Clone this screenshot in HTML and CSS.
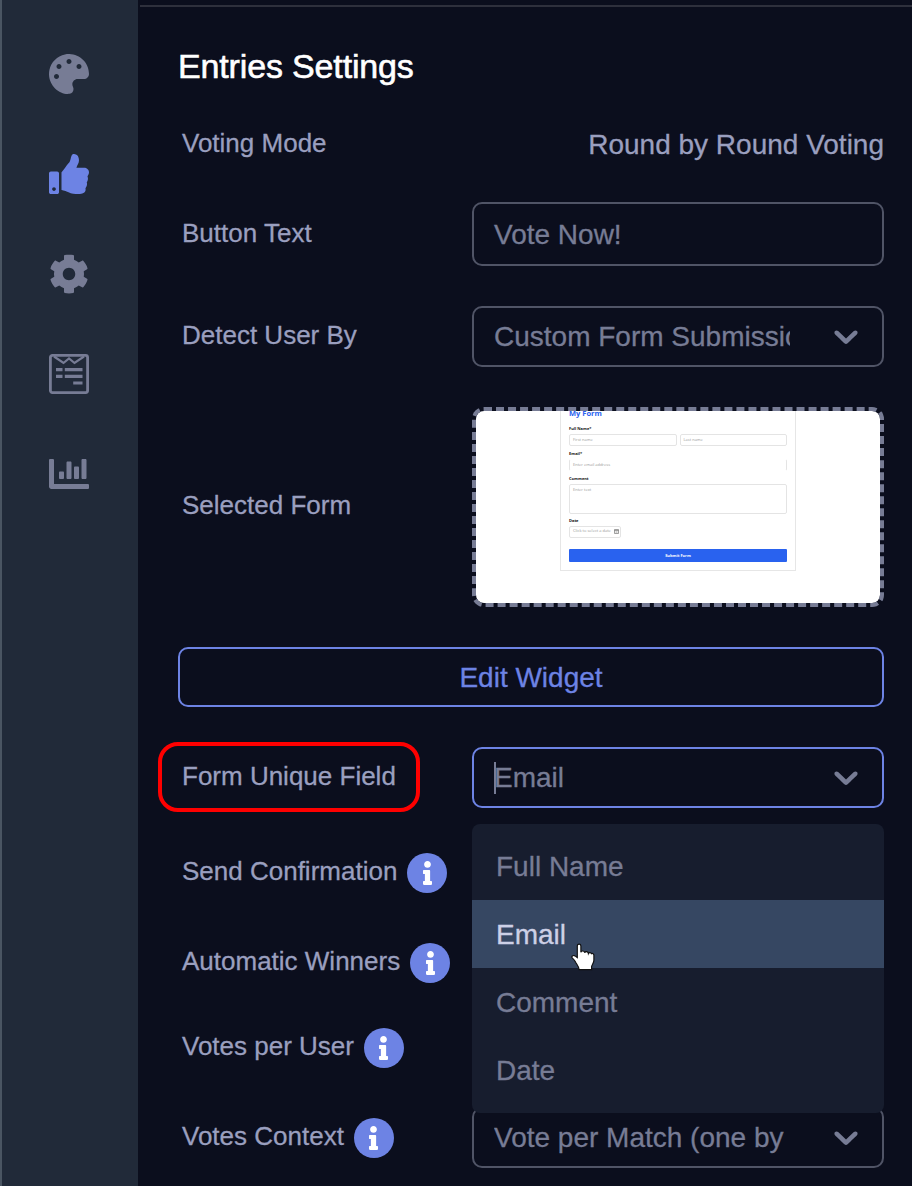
FILE: index.html
```
<!DOCTYPE html>
<html lang="en">
<head>
    <meta charset="UTF-8">
    <meta name="viewport" content="width=device-width, initial-scale=1.0">
    <title>Entries Settings</title>
    <link rel="stylesheet" href="styles.css">
</head>
<body>
    <!-- Shared icons -->
    <svg class="sprite" width="0" height="0">
        <symbol id="info" viewBox="0 0 192 512">
            <path d="M20 424.229h20V279.771H20c-11.046 0-20-8.954-20-20V212c0-11.046 8.954-20 20-20h112c11.046 0 20 8.954 20 20v212.229h20c11.046 0 20 8.954 20 20V492c0 11.046-8.954 20-20 20H20c-11.046 0-20-8.954-20-20v-47.771c0-11.046 8.954-20 20-20zM96 0C56.235 0 24 32.235 24 72s32.235 72 72 72 72-32.235 72-72S135.764 0 96 0z"/>
        </symbol>
        <symbol id="chevron" viewBox="0 0 20 20">
            <path d="M4.516 7.548c0.436-0.446 1.043-0.481 1.576 0l3.908 3.747 3.908-3.747c0.533-0.481 1.141-0.446 1.574 0 0.436 0.445 0.408 1.197 0 1.615-0.406 0.418-4.695 4.502-4.695 4.502-0.217 0.223-0.502 0.335-0.787 0.335s-0.57-0.112-0.789-0.335c0 0-4.287-4.084-4.695-4.502s-0.436-1.17 0-1.615z"/>
        </symbol>
    </svg>

    <div class="editor">
        <nav class="sidebar">
            <svg class="tab" viewBox="0 0 512 512"><path fill-rule="evenodd" d="M204.3 5C104.9 24.4 24.8 104.3 5.2 203.4c-37 187 131.7 326.4 258.8 306.7 41.2-6.4 61.4-54.6 42.5-91.7-23.1-45.4 9.9-98.4 60.9-98.4h79.7c35.8 0 64.8-29.6 64.9-65.3C511.5 97.1 368.1-26.9 204.3 5zM96 320c-17.7 0-32-14.3-32-32s14.3-32 32-32 32 14.3 32 32-14.3 32-32 32zm32-128c-17.7 0-32-14.3-32-32s14.3-32 32-32 32 14.3 32 32-14.3 32-32 32zm128-64c-17.7 0-32-14.3-32-32s14.3-32 32-32 32 14.3 32 32-14.3 32-32 32zm128 64c-17.7 0-32-14.3-32-32s14.3-32 32-32 32 14.3 32 32-14.3 32-32 32z"/></svg>
            <svg class="tab active" viewBox="0 0 512 512"><path fill-rule="evenodd" d="M104 224H24c-13.255 0-24 10.745-24 24v240c0 13.255 10.745 24 24 24h80c13.255 0 24-10.745 24-24V248c0-13.255-10.745-24-24-24zM64 472c-13.255 0-24-10.745-24-24s10.745-24 24-24 24 10.745 24 24-10.745 24-24 24zM384 81.452c0 42.416-25.97 66.208-33.277 94.548h101.723c33.397 0 59.397 27.746 59.553 58.098.084 17.938-7.546 37.249-19.439 49.197l-.11.11c9.836 23.337 8.237 56.037-9.308 79.469 8.681 25.895-.069 57.704-16.382 74.757 4.298 17.598 2.244 32.575-6.148 44.632C440.202 511.587 389.616 512 346.839 512l-2.845-.001c-48.287-.017-87.806-17.598-119.56-31.725-15.957-7.099-36.821-15.887-52.651-16.178-6.54-.12-11.783-5.457-11.783-11.998v-213.77c0-3.2 1.282-6.271 3.558-8.521 39.614-39.144 56.648-80.587 89.117-113.111 14.804-14.832 20.188-37.236 25.393-58.902C282.515 39.293 291.817 0 312 0c24 0 72 8 72 81.452z"/></svg>
            <svg class="tab" viewBox="0 0 512 512"><path fill-rule="evenodd" d="M487.4 315.7l-42.6-24.6c4.3-23.2 4.3-47 0-70.2l42.6-24.6c4.9-2.8 7.1-8.6 5.5-14-11.1-35.6-30-67.8-54.7-94.6-3.8-4.1-10-5.1-14.8-2.3L380.8 110c-17.9-15.4-38.5-27.3-60.8-35.1V25.8c0-5.6-3.9-10.5-9.4-11.7-36.7-8.2-74.3-7.8-109.2 0-5.5 1.2-9.4 6.1-9.4 11.7V75c-22.2 7.9-42.8 19.8-60.8 35.1L88.7 85.5c-4.9-2.8-11-1.9-14.8 2.3-24.7 26.7-43.6 58.9-54.7 94.6-1.7 5.4.6 11.2 5.5 14L67.3 221c-4.3 23.2-4.3 47 0 70.2l-42.6 24.6c-4.9 2.8-7.1 8.6-5.5 14 11.1 35.6 30 67.8 54.7 94.6 3.8 4.1 10 5.1 14.8 2.3l42.6-24.6c17.9 15.4 38.5 27.3 60.8 35.1v49.2c0 5.6 3.9 10.5 9.4 11.7 36.7 8.2 74.3 7.8 109.2 0 5.5-1.2 9.4-6.1 9.4-11.7v-49.2c22.2-7.9 42.8-19.8 60.8-35.1l42.6 24.6c4.9 2.8 11 1.9 14.8-2.3 24.7-26.7 43.6-58.9 54.7-94.6 1.5-5.5-.7-11.3-5.6-14.1zM256 336c-44.1 0-80-35.9-80-80s35.9-80 80-80 80 35.9 80 80-35.9 80-80 80z"/></svg>
            <svg class="tab" viewBox="0 0 40 40">
                <rect x="1.4" y="1.4" width="37.2" height="37.2" rx="2" fill="none" stroke="currentColor" stroke-width="2.8"/>
                <path d="M5 2.500l9.500 6.500L20 4.500l5.500 4.500L35 2.500" fill="none" stroke="currentColor" stroke-width="2.200"/>
                <path d="M7 14h6.500v3.200H7zM15.800 14h17.700v3.200H15.800zM7 20.700h6.500v3.200H7zM15.800 20.700h17.700v3.200H15.800zM24.200 27.400h9.300v3.200h-9.300z"/>
            </svg>
            <svg class="tab" viewBox="0 0 512 512"><path d="M332.8 320h38.4c6.4 0 12.8-6.4 12.8-12.8V172.8c0-6.4-6.4-12.8-12.8-12.8h-38.4c-6.4 0-12.8 6.4-12.8 12.8v134.4c0 6.4 6.4 12.8 12.8 12.8zm96 0h38.4c6.4 0 12.8-6.4 12.8-12.8V76.8c0-6.4-6.4-12.8-12.8-12.8h-38.4c-6.4 0-12.8 6.4-12.8 12.8v230.4c0 6.4 6.4 12.8 12.8 12.8zm-288 0h38.4c6.4 0 12.8-6.4 12.8-12.8v-70.4c0-6.4-6.4-12.8-12.8-12.8h-38.4c-6.4 0-12.8 6.4-12.8 12.8v70.4c0 6.4 6.4 12.8 12.8 12.8zm96 0h38.4c6.4 0 12.8-6.4 12.8-12.8V108.8c0-6.4-6.4-12.8-12.8-12.8h-38.4c-6.4 0-12.8 6.4-12.8 12.8v198.400c0 6.4 6.4 12.8 12.8 12.8zM496 384H64V80c0-8.840-7.160-16-16-16H16C7.160 64 0 71.160 0 80v336c0 17.670 14.330 32 32 32h464c8.840 0 16-7.160 16-16v-32c0-8.840-7.160-16-16-16z"/></svg>
        </nav>

        <main class="panel">
            <h1>Entries Settings</h1>

            <div class="row mode">
                <label>Voting Mode</label>
                <span class="value">Round by Round Voting</span>
            </div>
            <div class="row">
                <label>Button Text</label>
                <div class="field input">Vote Now!</div>
            </div>
            <div class="row">
                <label>Detect User By</label>
                <div class="field">
                    <span class="selected">Custom Form Submission</span>
                    <svg class="chevron"><use href="#chevron"/></svg>
                </div>
            </div>
            <div class="row form-row">
                <label>Selected Form</label>
                <div class="preview">
                    <div class="mini-form">
                        <div class="mini-title">My Form</div>
                        <div class="mini-label">Full Name*</div>
                        <div class="mini-names">
                            <div class="mini-input">First name</div>
                            <div class="mini-input">Last name</div>
                        </div>
                        <div class="mini-label">Email*</div>
                        <div class="mini-input email">Enter email address</div>
                        <div class="mini-label">Comment</div>
                        <div class="mini-input area">Enter text</div>
                        <div class="mini-label">Date</div>
                        <div class="mini-input date">
                            <span>Click to select a date</span>
                            <svg width="5" height="5" viewBox="0 0 5 5"><path d="M.5.500h4v4h-4zM.5 1.500h4M1.500 3h2" fill="none" stroke="#777" stroke-width=".7"/></svg>
                        </div>
                        <div class="mini-button">Submit Form</div>
                    </div>
                </div>
            </div>

            <button class="edit" type="button">Edit Widget</button>

            <div class="row">
                <label class="marked">Form Unique Field</label>
                <div class="field focused">
                    <span class="selected">Email</span>
                    <svg class="chevron"><use href="#chevron"/></svg>
                    <div class="menu">
                        <div class="option">Full Name</div>
                        <div class="option hover">
                            Email
                            <svg class="pointer" viewBox="0 0 24 28">
                                <path d="M6.300 14.500V3c0-2.400 3.600-2.400 3.600 0v6.300c.3-1.900 3.600-1.700 3.800.4.500-1.600 3.500-1.300 3.700.8.600-1.300 2.600-1 3.200.2.900-.6 2.300.1 2.300 1.600v5c0 2.600-1.900 4.300-2.300 6.200v3.200H8.200c-.4-3.200-2.200-5-3.400-7.200-.8-1.600-1.600-2.900-3.400-4.400-1.200-1.200 0-3 1.900-2.500 1.200.3 2.200 1.200 3 1.900z" fill="#fff" stroke="#111" stroke-width="1.200"/>
                            </svg>
                        </div>
                        <div class="option">Comment</div>
                        <div class="option">Date</div>
                    </div>
                </div>
            </div>
            <div class="row toggle first">
                <label>Send Confirmation</label>
                <span class="info"><svg><use href="#info"/></svg></span>
            </div>
            <div class="row toggle">
                <label>Automatic Winners</label>
                <span class="info"><svg><use href="#info"/></svg></span>
            </div>
            <div class="row toggle votes">
                <label>Votes per User</label>
                <span class="info"><svg><use href="#info"/></svg></span>
            </div>
            <div class="row context">
                <div class="with-info">
                    <label>Votes Context</label>
                    <span class="info"><svg><use href="#info"/></svg></span>
                </div>
                <div class="field">
                    <span class="selected">Vote per Match (one by</span>
                    <svg class="chevron"><use href="#chevron"/></svg>
                </div>
            </div>
        </main>
    </div>
</body>
</html>
```
FILE: styles.css
```
* {
    box-sizing: border-box;
}
body {
    margin: 0;
    font-family: "Liberation Sans", Arial, sans-serif;
    background: #0b0e1d;
    color: #9a9fbf;
    -webkit-text-stroke: 0.3px;
}
.sprite {
    display: block;
}
.editor {
    display: flex;
    height: 1186px;
    overflow: hidden;
}
.sidebar {
    display: flex;
    flex-direction: column;
    align-items: center;
    gap: 60px;
    width: 138px;
    padding-top: 54px;
    border-left: 2px solid #4a5562;
    background: #212a39;
    flex-shrink: 0;
}
.tab {
    width: 40px;
    height: 40px;
    margin-right: 2px;
    color: #777c95;
    fill: currentColor;
}
.tab.active {
    color: #6d83e4;
}
.panel {
    flex: 1;
    margin: 5px 0 0 2px;
    padding: 39px 28px 0 38px;
    border-top: 2px solid #2e303c;
}
h1 {
    margin: 0;
    font-size: 34px;
    line-height: 40px;
    font-weight: normal;
    letter-spacing: -0.15px;
    color: #ffffff;
    -webkit-text-stroke: 0.6px;
}
.row {
    display: flex;
    justify-content: space-between;
    align-items: center;
    margin-bottom: 40px;
}
.row label {
    padding: 0 0 3px 4px;
    font-size: 26px;
    line-height: 30px;
    white-space: nowrap;
}
.mode {
    height: 30px;
    margin: 43px 0 43px;
}
.value {
    padding-top: 2px;
    font-size: 28px;
    line-height: 30px;
}
.field {
    position: relative;
    display: flex;
    justify-content: space-between;
    align-items: center;
    width: 412px;
    height: 61px;
    padding: 0 16px 0 20px;
    border: 2px solid #505466;
    border-radius: 10px;
    font-size: 28px;
    line-height: 34px;
    color: #777c95;
}
.field.input {
    height: 64px;
    padding-top: 2px;
}
.field.focused {
    border-color: #6d83e4;
}
.selected {
    width: 296px;
    overflow: hidden;
    white-space: nowrap;
}
/* text caret of the opened select */
.focused .selected {
    height: 32px;
    border-left: 2px solid #777c95;
    line-height: 32px;
    text-indent: -2px;
}
.chevron {
    width: 40px;
    height: 40px;
    margin-bottom: 1px;
    fill: #777c95;
}
.form-row label {
    padding-bottom: 5px;
}
.preview {
    display: flex;
    justify-content: center;
    align-items: flex-start;
    width: 412px;
    height: 200px;
    border: 4px dashed #777c95;
    border-radius: 12px;
    background: #ffffff;
    background-clip: padding-box;
    overflow: hidden;
    -webkit-text-stroke: 0;
}
.mini-form {
    width: 236px;
    height: 160px;
    padding: 0 8px;
    border: 1px solid #e6e6e6;
    border-top: 0;
    font-family: "Open Sans", sans-serif;
    font-size: 4px;
    line-height: 5px;
    color: #999999;
}
.mini-title {
    height: 15px;
    margin-top: -3px;
    font-size: 7.5px;
    line-height: 10px;
    font-weight: bold;
    color: #2962ef;
}
.mini-label {
    margin: 3px 0;
    font-weight: bold;
    color: #111111;
}
.mini-names {
    display: flex;
    gap: 3px;
    height: 14px;
}
.mini-input {
    flex: 1;
    height: 12px;
    margin-bottom: 5px;
    padding: 3px;
    border: 1px solid #e4e4e4;
    border-radius: 2px;
    line-height: 4px;
}
.mini-names .mini-input {
    flex-shrink: 0;
}
.mini-input.email {
    border-color: #ffffff #e4e4e4;
}
.mini-input.area {
    height: 30px;
    margin-bottom: 4px;
}
.mini-input.date {
    display: flex;
    justify-content: space-between;
    width: 52px;
    padding: 2px 1px 2px 3px;
    white-space: nowrap;
}
.mini-button {
    height: 13px;
    margin-top: 11px;
    border-radius: 1px;
    background: #2962ef;
    color: #ffffff;
    line-height: 13px;
    font-weight: bold;
    text-align: center;
}
.edit {
    display: block;
    width: 100%;
    height: 60px;
    margin-bottom: 40px;
    padding: 2px 0 0;
    border: 2px solid #6d83e4;
    border-radius: 10px;
    background: none;
    color: #6d83e4;
    font-family: inherit;
    font-size: 28px;
    -webkit-text-stroke: 0.3px;
}
.marked {
    position: relative;
}
/* red highlight around the label */
.marked::after {
    content: "";
    position: absolute;
    top: -19px;
    left: -20px;
    width: 254px;
    height: 62px;
    border: 4px solid #ff0000;
    border-radius: 20px;
}
.menu {
    position: absolute;
    z-index: 2;
    top: 75px;
    left: -2px;
    width: 412px;
    height: 289px;
    padding: 8px 0;
    border-radius: 8px;
    background: #171d2e;
}
.option {
    position: relative;
    height: 68px;
    padding: 0 24px;
    line-height: 70px;
}
.option.hover {
    background: #364762;
    color: #cdd0e6;
}
.pointer {
    position: absolute;
    top: 43px;
    left: 99px;
    width: 24px;
    height: 28px;
}
.toggle {
    justify-content: flex-start;
    gap: 10px;
    height: 40px;
    margin: 0 0 50px;
}
.toggle label {
    padding-bottom: 5px;
}
.toggle.first {
    margin-top: 45px;
}
.toggle.votes {
    margin: -5px 0 0;
}
.info {
    display: flex;
    justify-content: center;
    align-items: center;
    width: 40px;
    height: 40px;
    border-radius: 50%;
    background: #6d83e4;
}
.info svg {
    width: 9px;
    height: 24px;
    fill: #ffffff;
}
.with-info {
    display: flex;
    align-items: center;
    gap: 10px;
}
.context {
    margin: 39px 0 0;
}
```
